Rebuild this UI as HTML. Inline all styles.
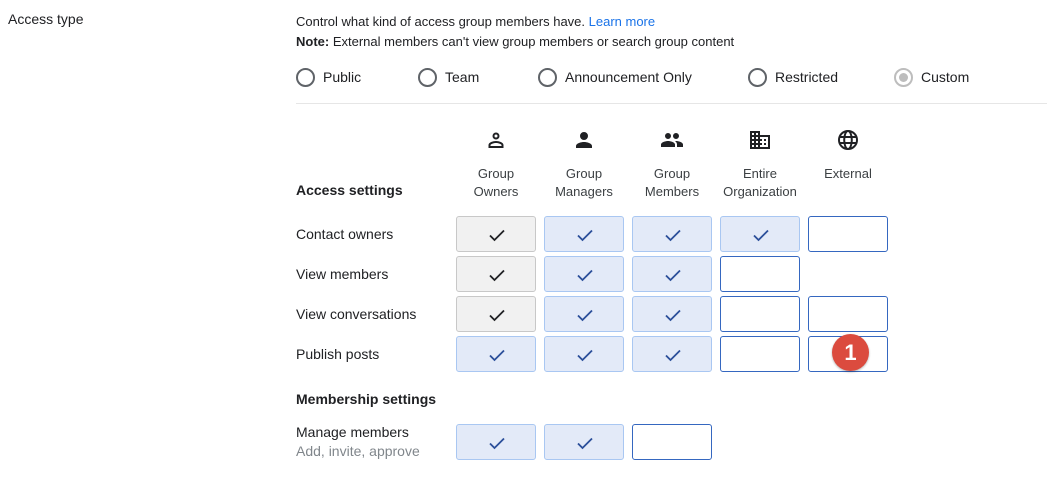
<!DOCTYPE html>
<html><head><meta charset="utf-8"><style>
body{margin:0;width:1047px;height:481px;background:#fff;font-family:"Liberation Sans",Arial,sans-serif;color:#202124;position:relative;overflow:hidden}
.a{position:absolute;white-space:nowrap}
.t14{font-size:14px}
.t13{font-size:13px}
.r{position:absolute;width:15px;height:15px;border:2px solid #5f6368;border-radius:50%;top:68px}
.b{position:absolute;width:78px;height:34px;border-radius:3px;box-sizing:content-box}
.g{background:#f1f1f1;border:1px solid #c8c8c8}
.bl{background:#e3eaf8;border:1px solid #a9c7f2}
.e{background:#fff;border:1px solid #3567c0}
.b svg{position:absolute;left:30px;top:8px}
.h{text-align:center;width:100px;font-size:13px;line-height:18px;color:#3c4043}
.ic{position:absolute;top:128px;width:24px;height:24px}
</style></head><body>
<div class="a t14" style="left:8px;top:11px">Access type</div>
<div class="a t13" style="left:296px;top:14px">Control what kind of access group members have. <span style="color:#1a73e8">Learn more</span></div>
<div class="a t13" style="left:296px;top:34px"><b>Note:</b> External members can't view group members or search group content</div>

<div class="r" style="left:296px"></div><div class="a t14" style="left:323px;top:69px">Public</div>
<div class="r" style="left:418px"></div><div class="a t14" style="left:445px;top:69px">Team</div>
<div class="r" style="left:538px"></div><div class="a t14" style="left:565px;top:69px">Announcement Only</div>
<div class="r" style="left:748px"></div><div class="a t14" style="left:775px;top:69px">Restricted</div>
<div class="r" style="left:894px;border-color:#bdbdbd"><div style="position:absolute;left:3px;top:3px;width:9px;height:9px;border-radius:50%;background:#bdbdbd"></div></div><div class="a t14" style="left:921px;top:69px">Custom</div>
<div class="a" style="left:296px;top:103px;width:751px;height:1px;background:#e6e6e6"></div>

<svg class="ic" style="left:484px" viewBox="0 0 24 24"><path fill="#202124" d="M12 4.5a3.5 3.5 0 1 1 0 7 3.5 3.5 0 0 1 0-7m0 2a1.5 1.5 0 1 0 0 3 1.5 1.5 0 0 0 0-3zM12 13c-3 0-7.5 1.4-7.5 4v3h15v-3c0-2.6-4.5-4-7.5-4zm5.5 5h-11v-1c.3-.9 3.4-2 5.5-2s5.2 1.1 5.5 2z"/></svg>
<svg class="ic" style="left:572px" viewBox="0 0 24 24"><path fill="#202124" d="M12 12a4 4 0 1 0 0-8 4 4 0 0 0 0 8zm0 2c-2.7 0-8 1.3-8 4v2h16v-2c0-2.7-5.3-4-8-4z"/></svg>
<svg class="ic" style="left:660px" viewBox="0 0 24 24"><path fill="#202124" d="M16 11a3 3 0 1 0 0-6 3 3 0 0 0 0 6zm-8 0a3 3 0 1 0 0-6 3 3 0 0 0 0 6zm0 2c-2.3 0-7 1.2-7 3.5V19h14v-2.5C15 14.2 10.3 13 8 13zm8 0c-.3 0-.6 0-1 .1 1.2.8 2 1.9 2 3.4V19h6v-2.5c0-2.3-4.7-3.5-7-3.5z"/></svg>
<svg class="ic" style="left:748px" viewBox="0 0 24 24"><path fill="#202124" d="M12 7V3H2v18h20V7H12zM6 19H4v-2h2v2zm0-4H4v-2h2v2zm0-4H4V9h2v2zm0-4H4V5h2v2zm4 12H8v-2h2v2zm0-4H8v-2h2v2zm0-4H8V9h2v2zm0-4H8V5h2v2zm10 12h-8v-2h2v-2h-2v-2h2v-2h-2V9h8v10zm-2-8h-2v2h2v-2zm0 4h-2v2h2v-2z"/></svg>
<svg class="ic" style="left:836px" viewBox="0 0 24 24"><circle cx="12" cy="12" r="9" fill="none" stroke="#202124" stroke-width="2"/><ellipse cx="12" cy="12" rx="3.8" ry="9" fill="none" stroke="#202124" stroke-width="2"/><path d="M3 9h18M3 15h18" stroke="#202124" stroke-width="2"/></svg>

<div class="a h" style="left:446px;top:165px">Group<br>Owners</div>
<div class="a h" style="left:534px;top:165px">Group<br>Managers</div>
<div class="a h" style="left:622px;top:165px">Group<br>Members</div>
<div class="a h" style="left:710px;top:165px">Entire<br>Organization</div>
<div class="a h" style="left:798px;top:165px">External</div>
<div class="a t14" style="left:296px;top:182px;font-weight:bold">Access settings</div>

<div class="a t14" style="left:296px;top:226px">Contact owners</div>
<div class="a t14" style="left:296px;top:266px">View members</div>
<div class="a t14" style="left:296px;top:306px">View conversations</div>
<div class="a t14" style="left:296px;top:346px">Publish posts</div>
<div class="a t14" style="left:296px;top:391px;font-weight:bold">Membership settings</div>
<div class="a t14" style="left:296px;top:424px">Manage members</div>
<div class="a t14" style="left:296px;top:443px;color:#80868b">Add, invite, approve</div>

<svg width="0" height="0" style="position:absolute"><defs>
<symbol id="ck" viewBox="0 0 20 20"><path d="M3 10.5l4.5 4.5L17 5.5" fill="none" stroke-width="1.8"/></symbol></defs></svg>

<div class="b g" style="left:456px;top:216px"><svg width="20" height="20"><use href="#ck" stroke="#202124"/></svg></div>
<div class="b bl" style="left:544px;top:216px"><svg width="20" height="20"><use href="#ck" stroke="#2b4f9a"/></svg></div>
<div class="b bl" style="left:632px;top:216px"><svg width="20" height="20"><use href="#ck" stroke="#2b4f9a"/></svg></div>
<div class="b bl" style="left:720px;top:216px"><svg width="20" height="20"><use href="#ck" stroke="#2b4f9a"/></svg></div>
<div class="b e" style="left:808px;top:216px"></div>

<div class="b g" style="left:456px;top:256px"><svg width="20" height="20"><use href="#ck" stroke="#202124"/></svg></div>
<div class="b bl" style="left:544px;top:256px"><svg width="20" height="20"><use href="#ck" stroke="#2b4f9a"/></svg></div>
<div class="b bl" style="left:632px;top:256px"><svg width="20" height="20"><use href="#ck" stroke="#2b4f9a"/></svg></div>
<div class="b e" style="left:720px;top:256px"></div>

<div class="b g" style="left:456px;top:296px"><svg width="20" height="20"><use href="#ck" stroke="#202124"/></svg></div>
<div class="b bl" style="left:544px;top:296px"><svg width="20" height="20"><use href="#ck" stroke="#2b4f9a"/></svg></div>
<div class="b bl" style="left:632px;top:296px"><svg width="20" height="20"><use href="#ck" stroke="#2b4f9a"/></svg></div>
<div class="b e" style="left:720px;top:296px"></div>
<div class="b e" style="left:808px;top:296px"></div>

<div class="b bl" style="left:456px;top:336px"><svg width="20" height="20"><use href="#ck" stroke="#2b4f9a"/></svg></div>
<div class="b bl" style="left:544px;top:336px"><svg width="20" height="20"><use href="#ck" stroke="#2b4f9a"/></svg></div>
<div class="b bl" style="left:632px;top:336px"><svg width="20" height="20"><use href="#ck" stroke="#2b4f9a"/></svg></div>
<div class="b e" style="left:720px;top:336px"></div>
<div class="b e" style="left:808px;top:336px"></div>

<div class="b bl" style="left:456px;top:424px"><svg width="20" height="20"><use href="#ck" stroke="#2b4f9a"/></svg></div>
<div class="b bl" style="left:544px;top:424px"><svg width="20" height="20"><use href="#ck" stroke="#2b4f9a"/></svg></div>
<div class="b e" style="left:632px;top:424px"></div>

<div class="a" style="left:832px;top:334px;width:37px;height:37px;border-radius:50%;background:#db4b3e;box-shadow:0 1px 2px rgba(0,0,0,.3);color:#fff;font-weight:bold;font-size:22px;line-height:37px;text-align:center">1</div>
</body></html>
